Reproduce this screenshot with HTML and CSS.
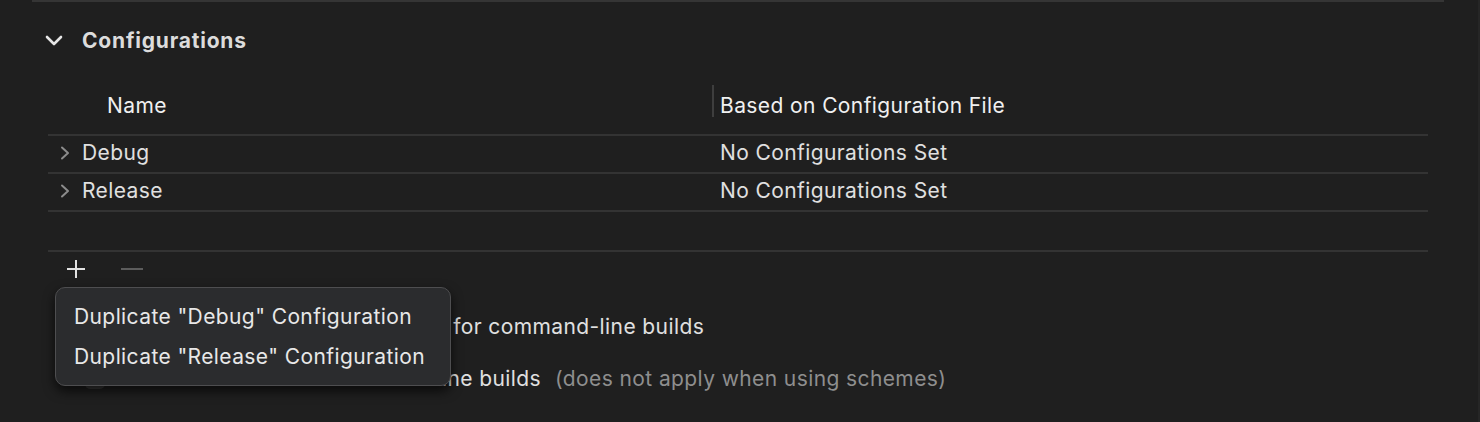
FILE: index.html
```html
<!DOCTYPE html>
<html lang="en">
<head>
    <meta charset="UTF-8">
    <title>Configurations</title>
    <link rel="stylesheet" href="styles.css">
</head>
<body>
    <div class="section">
        <div class="section-head">
            <svg class="disclosure" width="18" height="12" viewBox="0 0 18 12"><path d="M2 3 L9 10 L16 3" fill="none" stroke="#e6e6e6" stroke-width="2.6" stroke-linecap="round" stroke-linejoin="round"/></svg>
            <h2>Configurations</h2>
        </div>

        <div class="table">
            <div class="thead">
                <div class="col-name">Name</div>
                <div class="col-file"><span class="col-sep"></span>Based on Configuration File</div>
            </div>
            <div class="row">
                <div class="col-name">
                    <svg class="row-arrow" width="10" height="14" viewBox="0 0 10 14"><path d="M2 1.5 L8 7 L2 12.5" fill="none" stroke="#8c8c8c" stroke-width="2" stroke-linecap="round" stroke-linejoin="round"/></svg>
                    Debug
                </div>
                <div class="col-file">No Configurations Set</div>
            </div>
            <div class="row">
                <div class="col-name">
                    <svg class="row-arrow" width="10" height="14" viewBox="0 0 10 14"><path d="M2 1.5 L8 7 L2 12.5" fill="none" stroke="#8c8c8c" stroke-width="2" stroke-linecap="round" stroke-linejoin="round"/></svg>
                    Release
                </div>
                <div class="col-file">No Configurations Set</div>
            </div>
            <div class="row empty"></div>
        </div>

        <div class="toolbar">
            <span class="tool-btn plus">
                <svg width="20" height="20" viewBox="0 0 20 20"><path d="M10 1 V19 M1 10 H19" stroke="#e2e2e2" stroke-width="2"/></svg>
            </span>
            <span class="tool-btn minus">
                <svg width="22" height="4" viewBox="0 0 22 4"><path d="M0 2 H22" stroke="#5c5c5c" stroke-width="2"/></svg>
            </span>
        </div>

        <div class="options">
            <div class="option">
                <span class="opt-label">Use</span>
                <span class="popup">Release</span>
                <span class="opt-label">for command-line builds</span>
            </div>
            <div class="option">
                <span class="checkbox"></span>
                <span class="opt-label wide">Enable for command-line builds</span>
                <span class="opt-note">(does not apply when using schemes)</span>
            </div>
        </div>

        <div class="menu">
            <div class="menu-item">Duplicate "Debug" Configuration</div>
            <div class="menu-item">Duplicate "Release" Configuration</div>
        </div>
    </div>
</body>
</html>
```

FILE: styles.css
```css
body {
    margin: 0;
    background: #1f1f1f;
    color: #e4e4e4;
    font-family: 'Inter', 'Liberation Sans', sans-serif;
    font-size: 21px;
    letter-spacing: 0.4px;
    height: 422px;
    overflow: hidden;
    border-right: 2px solid #262626;
}

.section {
    position: relative;
    margin: 0 34px 0 32px;
    border-top: 2px solid #353535;
}

.section-head {
    display: flex;
    align-items: center;
    height: 76px;
    padding-left: 13px;
}

.disclosure {
    margin-right: 19px;
}

.section-head h2 {
    margin: 0;
    font-size: 21px;
    font-weight: 700;
    letter-spacing: 0.8px;
    color: #dcdcdc;
}

.table {
    margin: 0 16px;
}

.thead, .row {
    display: flex;
    align-items: center;
    border-bottom: 2px solid #333;
}

.thead {
    box-sizing: border-box;
    height: 58px;
    padding-bottom: 2px;
    color: #f0f0f0;
}

.row {
    height: 32px;
    padding-bottom: 4px;
    color: #e0e0e0;
}

.row.empty {
    height: 38px;
    padding-bottom: 0;
}

.col-name {
    width: 664px;
    display: flex;
    align-items: center;
}

.thead .col-name {
    padding-left: 59px;
    width: 605px;
}

.col-file {
    position: relative;
    flex: 1;
    padding-left: 8px;
}

.col-sep {
    position: absolute;
    left: 0;
    top: -8px;
    width: 2px;
    height: 32px;
    background: #3e3e3e;
}

.row-arrow {
    margin-left: 12px;
    margin-right: 12px;
    margin-top: 2px;
}

.toolbar {
    display: flex;
    align-items: center;
    height: 34px;
    padding-left: 34px;
}

.tool-btn {
    display: flex;
    align-items: center;
}

.tool-btn.minus {
    margin-left: 35px;
}

.options {
    padding-left: 53px;
    color: #e0e0e0;
}

.option {
    display: flex;
    align-items: center;
    height: 52px;
    gap: 8px;
}

.option:first-child {
    margin-top: 14px;
}

.popup {
    width: 312px;
    box-sizing: border-box;
    padding: 2px 8px;
    border-radius: 5px;
    background: #3a3a3a;
}

.checkbox {
    width: 20px;
    height: 22px;
    border-radius: 5px;
    background: #3b3b3b;
    margin-right: 4px;
}

.opt-label.wide {
    width: 424px;
    text-align: right;
    white-space: nowrap;
}

.opt-note {
    margin-left: 6px;
    color: #8e8e8e;
}

.menu {
    position: absolute;
    left: 23px;
    top: 285px;
    width: 396px;
    height: 99px;
    padding-top: 9px;
    box-sizing: border-box;
    border: 1px solid #4e4e50;
    border-radius: 10px;
    background: #2b2c2e;
    box-shadow: 0 5px 12px rgba(0, 0, 0, 0.7);
}

.menu-item {
    height: 40px;
    line-height: 40px;
    padding-left: 18px;
    color: #e8e8e8;
}
```
